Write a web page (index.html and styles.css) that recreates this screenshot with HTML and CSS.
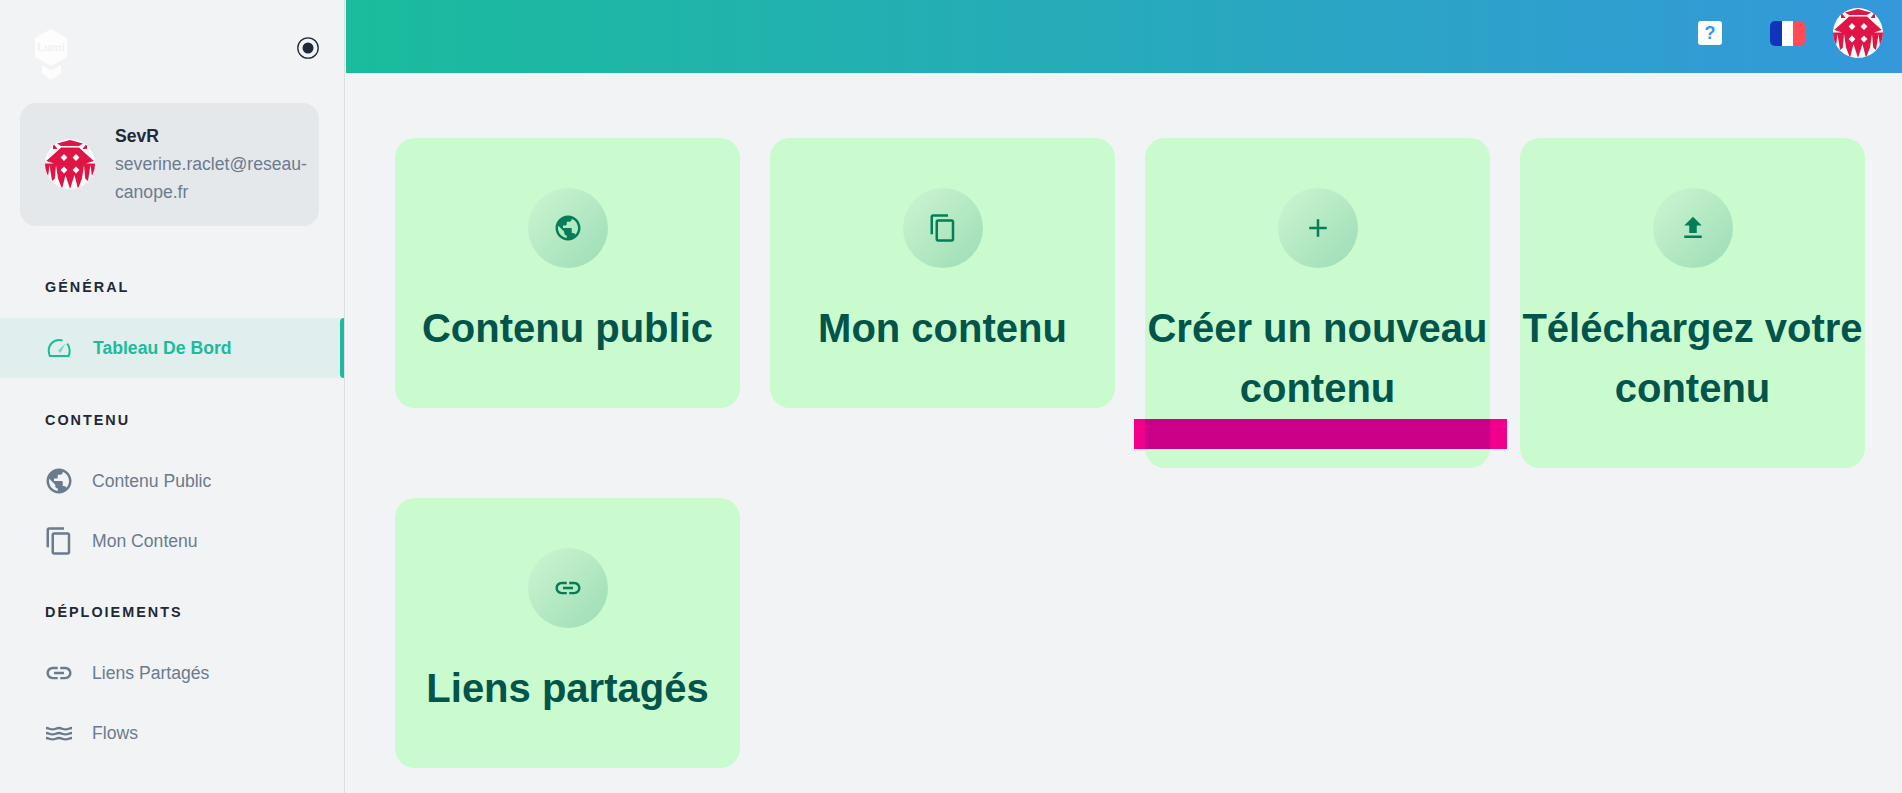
FILE: index.html
```html
<!DOCTYPE html>
<html lang="fr">
<head>
    <meta charset="UTF-8">
    <meta name="viewport" content="width=device-width, initial-scale=1.0">
    <title>Lumi - Tableau De Bord</title>
    <link rel="stylesheet" href="styles.css">
</head>
<body>
    <svg class="icon-defs" width="0" height="0">
        <defs>
            <clipPath id="avatar-clip"><circle cx="25" cy="25" r="25"/></clipPath>
            <symbol id="avatar" viewBox="0 0 50 50">
                <g clip-path="url(#avatar-clip)">
                    <rect width="50" height="50" fill="#fff"/>
                    <g fill="#e01546">
                        <polygon points="12,4.5 25,1 38,4.5 34,7 16,7"/>
                        <polygon points="8,4 12.5,10 8,10"/>
                        <polygon points="42,4 37.5,10 42,10"/>
                        <polygon points="16,8.5 34,8.5 41,15 50,23 50,30 47,38 45.5,26 43,42 38,38 36,42 33,50 29.5,36 25,50 20.5,36 17,50 14,42 12,38 7,42 4.5,26 3,38 0,30 0,23 9,15"/>
                    </g>
                    <g fill="#fff">
                        <polygon points="19,15 22.4,18.5 19,22 15.6,18.5"/>
                        <polygon points="31,15 34.4,18.5 31,22 27.6,18.5"/>
                        <polygon points="19,27.5 22.4,31 19,34.5 15.6,31"/>
                        <polygon points="31,27.5 34.4,31 31,34.5 27.6,31"/>
                        <polygon points="11,26 9.5,43 13.500,43"/>
                        <polygon points="39,26 40.5,43 36.500,43"/>
                        <polygon points="0,21.500 9,24.500 0,24.500"/>
                        <polygon points="50,21.500 41,24.500 50,24.500"/>
                    </g>
                </g>
            </symbol>
            <symbol id="ic-public" viewBox="0 0 24 24">
                <path d="M12 2C6.48 2 2 6.48 2 12s4.48 10 10 10 10-4.48 10-10S17.52 2 12 2zm-1 17.93c-3.95-.49-7-3.85-7-7.93 0-.62.08-1.21.21-1.79L9 15v1c0 1.1.9 2 2 2v1.93zm6.9-2.54c-.26-.81-1-1.39-1.9-1.39h-1v-3c0-.55-.45-1-1-1H8v-2h2c.55 0 1-.45 1-1V7h2c1.1 0 2-.9 2-2v-.41c2.93 1.19 5 4.06 5 7.41 0 2.08-.8 3.97-2.1 5.39z"/>
            </symbol>
            <symbol id="ic-copy" viewBox="0 0 24 24">
                <path d="M16 1H4c-1.1 0-2 .9-2 2v14h2V3h12V1zm3 4H8c-1.1 0-2 .9-2 2v14c0 1.1.9 2 2 2h11c1.1 0 2-.9 2-2V7c0-1.1-.9-2-2-2zm0 16H8V7h11v14z"/>
            </symbol>
            <symbol id="ic-add" viewBox="0 0 24 24">
                <path d="M19 13h-6v6h-2v-6H5v-2h6V5h2v6h6v2z"/>
            </symbol>
            <symbol id="ic-upload" viewBox="0 0 24 24">
                <path d="M9 16h6v-6h4l-7-7-7 7h4zm-4 2h14v2H5z"/>
            </symbol>
            <symbol id="ic-link" viewBox="0 0 24 24">
                <path d="M3.9 12c0-1.71 1.39-3.1 3.1-3.1h4V7H7c-2.76 0-5 2.24-5 5s2.24 5 5 5h4v-1.9H7c-1.71 0-3.1-1.39-3.1-3.1zM8 13h8v-2H8v2zm9-6h-4v1.9h4c1.71 0 3.1 1.39 3.1 3.1s-1.39 3.1-3.1 3.1h-4V17h4c2.76 0 5-2.24 5-5s-2.24-5-5-5z"/>
            </symbol>
        </defs>
    </svg>

    <div class="app">
        <aside class="sidebar">
            <div class="sidebar-head">
                <svg class="logo" width="32" height="51" viewBox="0 0 32 51">
                    <polygon points="16,0 32,9 32,28 16,37 0,28 0,9" fill="#fdfdfe"/>
                    <polygon points="7,36 16,42 26,36 26,44 16,51 7,44" fill="#fdfdfe"/>
                    <text x="16" y="22" text-anchor="middle" class="logo-text">Lumi</text>
                </svg>
                <svg class="theme-toggle" width="22" height="22" viewBox="0 0 22 22">
                    <circle cx="11" cy="11" r="10.2" fill="none" stroke="#1f2937" stroke-width="1.3"/>
                    <circle cx="11" cy="11" r="5.5" fill="#1f2937"/>
                </svg>
            </div>

            <div class="user-card">
                <svg class="user-avatar" width="50" height="50"><use href="#avatar"/></svg>
                <div class="user-info">
                    <div class="user-name">SevR</div>
                    <div class="user-email">severine.raclet@reseau-canope.fr</div>
                </div>
            </div>

            <nav class="nav">
                <div class="nav-label">Général</div>
                <a class="nav-item active">
                    <svg class="nav-icon" width="30" height="30" viewBox="0 0 30 30">
                        <path d="M23.2 10.7A10.5 10.5 0 0 1 25.7 17.5Q25.7 20.5 24.6 23H5.8Q4.7 20 4.7 17.5A10.5 10.5 0 0 1 15.2 7Q17 7 18.5 7.5" fill="none" stroke="currentColor" stroke-width="2"/>
                        <polygon points="21.5,10.5 16.5,20 14,17.5" fill="currentColor" opacity="0.5"/>
                    </svg>
                    <span>Tableau De Bord</span>
                </a>

                <div class="nav-label">Contenu</div>
                <a class="nav-item">
                    <svg class="nav-icon" width="30" height="30"><use href="#ic-public"/></svg>
                    <span>Contenu Public</span>
                </a>
                <a class="nav-item">
                    <svg class="nav-icon" width="30" height="30"><use href="#ic-copy"/></svg>
                    <span>Mon Contenu</span>
                </a>

                <div class="nav-label nav-label-last">Déploiements</div>
                <a class="nav-item">
                    <svg class="nav-icon" width="30" height="30"><use href="#ic-link"/></svg>
                    <span>Liens Partagés</span>
                </a>
                <a class="nav-item">
                    <svg class="nav-icon" width="30" height="30" viewBox="0 0 30 30">
                        <path d="M2 10c3.3 0 3.3 1.4 6.5 1.4s3.3-1.4 6.5-1.4 3.3 1.4 6.5 1.4 3.3-1.4 6.5-1.4M2 15c3.3 0 3.3 1.4 6.5 1.4s3.3-1.4 6.5-1.4 3.3 1.4 6.5 1.4 3.3-1.4 6.5-1.4M2 20c3.3 0 3.3 1.4 6.5 1.4s3.3-1.4 6.5-1.4 3.3 1.4 6.5 1.4 3.3-1.4 6.5-1.4" fill="none" stroke="currentColor" stroke-width="2.3"/>
                    </svg>
                    <span>Flows</span>
                </a>
            </nav>
        </aside>

        <div class="main">
            <header class="topbar">
                <div class="help-btn">?</div>
                <div class="flag"><span class="flag-blue"></span><span class="flag-white"></span><span class="flag-red"></span></div>
                <svg class="top-avatar" width="50" height="50"><use href="#avatar"/></svg>
            </header>

            <div class="content">
                <div class="card">
                    <div class="card-icon"><svg width="30" height="30"><use href="#ic-public"/></svg></div>
                    <h2>Contenu public</h2>
                </div>
                <div class="card">
                    <div class="card-icon"><svg width="30" height="30"><use href="#ic-copy"/></svg></div>
                    <h2>Mon contenu</h2>
                </div>
                <div class="card">
                    <div class="card-icon"><svg width="30" height="30"><use href="#ic-add"/></svg></div>
                    <h2>Créer un nouveau contenu</h2>
                    <div class="highlight-bar"></div>
                </div>
                <div class="card">
                    <div class="card-icon"><svg width="30" height="30"><use href="#ic-upload"/></svg></div>
                    <h2>Téléchargez votre contenu</h2>
                </div>
                <div class="card">
                    <div class="card-icon"><svg width="30" height="30"><use href="#ic-link"/></svg></div>
                    <h2>Liens partagés</h2>
                </div>
            </div>
        </div>
    </div>
</body>
</html>
```

FILE: styles.css
```css
:root {
    --bg: #f2f3f5;
    --teal: #1abc9c;
    --blue: #3498db;
    --text: #1f2937;
    --muted: #6b7b8d;
    --card: #c9fbce;
    --card-title: #03544b;
    --card-icon: #047e56;
}

* {
    box-sizing: border-box;
}

body {
    font-family: 'Liberation Sans', Arial, sans-serif;
    margin: 0;
    padding: 0;
    height: 793px;
    overflow: hidden;
    background-color: var(--bg);
}

.icon-defs {
    display: block;
    height: 0;
}

.app {
    display: flex;
    height: 793px;
}

/* Sidebar */
.sidebar {
    width: 345px;
    flex-shrink: 0;
    margin-right: 1px;
    border-right: 1px solid #dcdfe3;
}

.sidebar-head {
    display: flex;
    justify-content: space-between;
    align-items: flex-start;
    padding: 29px 25px 23px 35px;
}

.logo {
    display: block;
}

.logo-text {
    font-family: 'Liberation Sans', Arial, sans-serif;
    font-size: 11.5px;
    font-weight: bold;
    fill: #f0f1f3;
}

.theme-toggle {
    display: block;
    margin-top: 8px;
}

.user-card {
    display: flex;
    align-items: center;
    gap: 20px;
    width: 299px;
    margin-left: 20px;
    padding: 19px 10px 20px 25px;
    background: #e5e8eb;
    border-radius: 16px;
}

.user-avatar {
    flex-shrink: 0;
}

.user-info {
    font-size: 17.6px;
    line-height: 28px;
}

.user-name {
    font-weight: bold;
    color: var(--text);
}

.user-email {
    color: var(--muted);
}

.nav {
    padding-top: 19px;
}

.nav-label {
    margin: 32px 0 21px 45px;
    font-size: 14.4px;
    line-height: 20px;
    font-weight: bold;
    letter-spacing: 2px;
    text-transform: uppercase;
    color: var(--text);
}

.nav-label-last {
    margin-top: 31px;
}

.nav-item {
    position: relative;
    display: flex;
    align-items: center;
    gap: 18px;
    height: 60px;
    padding-left: 44px;
    font-size: 17.6px;
    color: var(--muted);
}

.nav-icon {
    fill: currentColor;
    flex-shrink: 0;
}

.nav-item.active {
    gap: 19px;
    background: #e0eeed;
    color: var(--teal);
    font-weight: bold;
}

.nav-item.active::after {
    content: "";
    position: absolute;
    top: 0;
    right: 0;
    bottom: 0;
    width: 4px;
    background: var(--teal);
    border-radius: 4px 0 0 4px;
}

/* Main */
.main {
    flex-grow: 1;
    min-width: 0;
}

.topbar {
    display: flex;
    justify-content: flex-end;
    align-items: center;
    height: 73px;
    padding: 8px 19px 15px 0;
    background: linear-gradient(90deg, var(--teal), var(--blue));
}

.help-btn {
    width: 24px;
    height: 24px;
    margin-right: 48px;
    background: white;
    border-radius: 3px;
    color: var(--blue);
    font-size: 18px;
    font-weight: bold;
    line-height: 24px;
    text-align: center;
}

.flag {
    display: flex;
    width: 35px;
    height: 25px;
    margin-right: 28px;
    border-radius: 5px;
    overflow: hidden;
}

.flag span {
    flex: 1;
}

.flag-blue {
    background: #1035bb;
}

.flag-white {
    background: white;
}

.flag-red {
    background: #ff4b55;
}

.content {
    display: grid;
    grid-template-columns: repeat(4, 1fr);
    gap: 30px;
    align-items: start;
    padding: 65px 37px 0 49px;
}

.card {
    position: relative;
    padding: 50px 0;
    background: var(--card);
    border-radius: 20px;
    text-align: center;
}

.card-icon {
    display: flex;
    align-items: center;
    justify-content: center;
    width: 80px;
    height: 80px;
    margin: 0 auto 30px;
    border-radius: 50%;
    background: linear-gradient(135deg, #cdf6d2, #9cdcb5);
}

.card-icon svg {
    fill: var(--card-icon);
}

.card h2 {
    margin: 0;
    font-size: 40px;
    line-height: 60px;
    font-weight: bold;
    color: var(--card-title);
}

/* Pink strip laid over the third card */
.highlight-bar {
    position: absolute;
    top: 281px;
    left: -11px;
    right: -17px;
    height: 30px;
    background: linear-gradient(90deg, #f0008c 11px, #cc0088 11px, #cc0088 356px, #f0008c 356px);
}
```
